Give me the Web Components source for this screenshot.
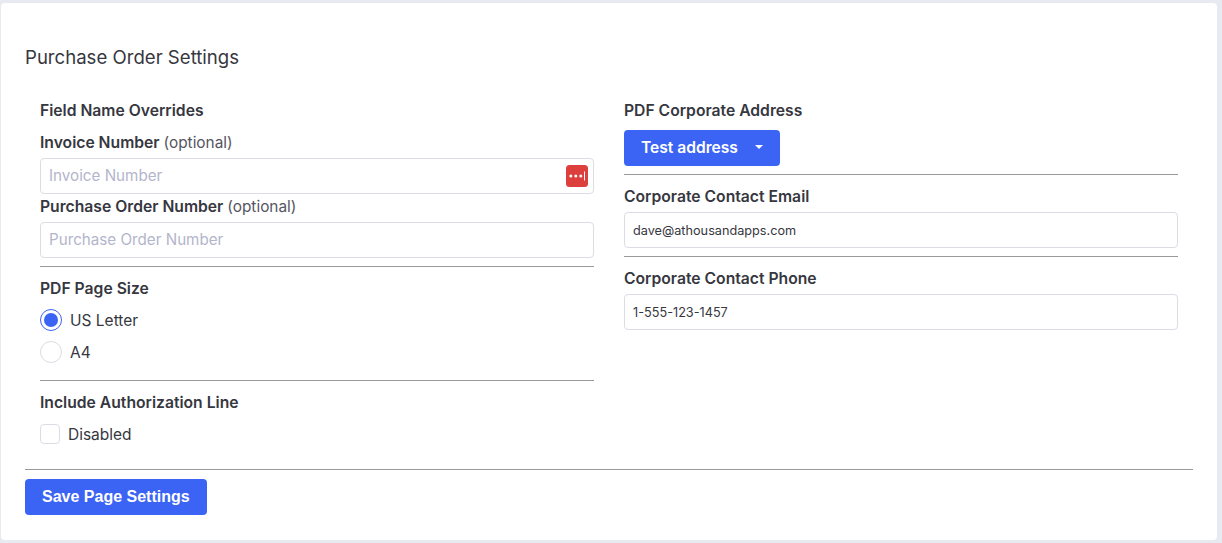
<!doctype html>
<html>
<head>
<meta charset="utf-8">
<title>Purchase Order Settings</title>
<style>
html, body { margin: 0; height: 100%; }
body {
  background: #e8eaf1;
  padding: 3px 5px 3px 1px;
  box-sizing: border-box;
  height: 543px;
  overflow: hidden;
  font-family: Inter, "Liberation Sans", sans-serif;
  color: #363740;
}
</style>
</head>
<body>
<settings-card heading="Purchase Order Settings">
  <form-column slot="left">
    <field-label>Field Name Overrides</field-label>
    <text-field style="margin-top:8px" label="Invoice Number" optional placeholder="Invoice Number" locker></text-field>
    <text-field label="Purchase Order Number" optional placeholder="Purchase Order Number"></text-field>
    <form-rule></form-rule>
    <field-label>PDF Page Size</field-label>
    <radio-option style="margin-top:4px" checked>US Letter</radio-option>
    <radio-option>A4</radio-option>
    <form-rule style="margin-top:12px"></form-rule>
    <field-label>Include Authorization Line</field-label>
    <check-option>Disabled</check-option>
  </form-column>
  <form-column slot="right">
    <field-label>PDF Corporate Address</field-label>
    <blue-button caret style="margin-top:8px">Test address</blue-button>
    <form-rule></form-rule>
    <text-field small label="Corporate Contact Email" value="dave@athousandapps.com"></text-field>
    <form-rule></form-rule>
    <text-field small label="Corporate Contact Phone" value="1-555-123-1457"></text-field>
  </form-column>
  <blue-button slot="footer" arial>Save Page Settings</blue-button>
</settings-card>

<script>
let card_css = `
:host { display: block; height: 537px; box-sizing: border-box; background: #fff; border-radius: 4px; padding: 24px; }
h2 { margin: 16px 0 27px; font-size: 18.6px; line-height: 28px; font-weight: 400; color: #363740; }
.cols { display: grid; grid-template-columns: 1fr 1fr; height: 371px; }
.cols > div { padding: 0 15px; }
hr { margin: 0 0 9px; border: 0; border-top: 1px solid #999; }
`;

let shared_input = `
input {
  display: block; width: 100%; height: 36px; box-sizing: border-box;
  border: 1px solid #dcdce6; border-radius: 4px; background: #fff;
  padding: 0 8px 2px; outline: none;
  font-family: Inter, "Liberation Sans", sans-serif; font-size: 15.2px; color: #363740;
}
input::placeholder { color: #b3b5cc; opacity: 1; }
`;

class SettingsCard extends HTMLElement {
  connectedCallback() {
    let shadow = this.attachShadow({ mode: 'open' });
    shadow.innerHTML = `<style>${card_css}</style>
      <h2>${this.getAttribute('heading')}</h2>
      <div class="cols"><div><slot name="left"></slot></div><div><slot name="right"></slot></div></div>
      <hr><slot name="footer"></slot>`;
  }
}

class FormColumn extends HTMLElement {
  connectedCallback() {
    this.attachShadow({ mode: 'open' }).innerHTML = `<style>:host { display: block; }</style><slot></slot>`;
  }
}

class FieldLabel extends HTMLElement {
  connectedCallback() {
    // 1px top padding keeps the text on the same baseline as the reference
    this.attachShadow({ mode: 'open' }).innerHTML = `<style>
      :host { display: block; padding-top: 1px; font-size: 15.7px; line-height: 23px; font-weight: 600; color: #363740; }
    </style><slot></slot>`;
  }
}

class FormRule extends HTMLElement {
  connectedCallback() {
    this.attachShadow({ mode: 'open' }).innerHTML = `<style>
      :host { display: block; height: 1px; margin: 8px 0 9px; background: #999; }
    </style>`;
  }
}

class TextField extends HTMLElement {
  connectedCallback() {
    let optional = this.hasAttribute('optional') ? ' <span>(optional)</span>' : '';
    let locker = this.hasAttribute('locker') ? `<svg class="locker" width="22" height="22" viewBox="0 0 22 22">
        <rect width="22" height="22" rx="3.5" fill="#dc3f3c"/>
        <circle cx="4.8" cy="11" r="1.5" fill="#fff"/><circle cx="9.8" cy="11" r="1.5" fill="#fff"/><circle cx="14.8" cy="11" r="1.5" fill="#fff"/>
        <rect x="18" y="6.5" width="1" height="9" fill="#fff"/>
      </svg>` : '';
    let shadow = this.attachShadow({ mode: 'open' });
    shadow.innerHTML = `<style>${shared_input}
      :host { display: block; }
      label { display: block; padding-top: 1px; font-size: 15.7px; line-height: 23px; font-weight: 600; color: #363740; margin-bottom: 4px; }
      span { font-weight: 400; font-size: 15.4px; color: #55555f; }
      .wrap { position: relative; }
      .locker { position: absolute; right: 6px; top: 7px; }
      :host([small]) input { font-size: 12.7px; padding-bottom: 0; }
    </style>
    <label>${this.getAttribute('label')}${optional}</label>
    <div class="wrap"><input placeholder="${this.getAttribute('placeholder') ?? ''}" value="${this.getAttribute('value') ?? ''}">${locker}</div>`;
  }
}

class RadioOption extends HTMLElement {
  connectedCallback() {
    this.attachShadow({ mode: 'open' }).innerHTML = `<style>
      :host { display: flex; align-items: center; gap: 8px; height: 32px; font-size: 15.5px; color: #363740; }
      i { width: 22px; height: 22px; box-sizing: border-box; border: 1px solid #dcdce6; border-radius: 50%; display: grid; place-items: center; }
      :host([checked]) i { border-color: #3c64f4; }
      :host([checked]) i::after { content: ''; width: 14px; height: 14px; border-radius: 50%; background: #3c64f4; }
    </style><i></i><slot></slot>`;
  }
}

class CheckOption extends HTMLElement {
  connectedCallback() {
    this.attachShadow({ mode: 'open' }).innerHTML = `<style>
      :host { display: flex; align-items: center; gap: 8px; height: 32px; margin-top: 4px; font-size: 15.5px; color: #363740; }
      i { width: 20px; height: 20px; box-sizing: border-box; border: 1px solid #dcdce6; border-radius: 4px; }
    </style><i></i><slot></slot>`;
  }
}

class BlueButton extends HTMLElement {
  connectedCallback() {
    let caret = this.hasAttribute('caret') ? `<svg width="8" height="4" viewBox="0 0 8 4"><path d="M0 0h8L4 4z" fill="#fff"/></svg>` : '';
    this.attachShadow({ mode: 'open' }).innerHTML = `<style>
      :host { display: inline-flex; align-items: center; gap: 17px; height: 36px; box-sizing: border-box; padding: 0 17px 2px;
        background: #3c64f4; border-radius: 4px; color: #fff; font-size: 15.6px; font-weight: 600; vertical-align: top; }
      :host([arial]) { font-family: "Liberation Sans", Arial, sans-serif; font-size: 16px; font-weight: 700; padding-bottom: 0; }
    </style><slot></slot>${caret}`;
  }
}

customElements.define('settings-card', SettingsCard);
customElements.define('form-column', FormColumn);
customElements.define('field-label', FieldLabel);
customElements.define('form-rule', FormRule);
customElements.define('text-field', TextField);
customElements.define('radio-option', RadioOption);
customElements.define('check-option', CheckOption);
customElements.define('blue-button', BlueButton);
</script>
</body>
</html>
